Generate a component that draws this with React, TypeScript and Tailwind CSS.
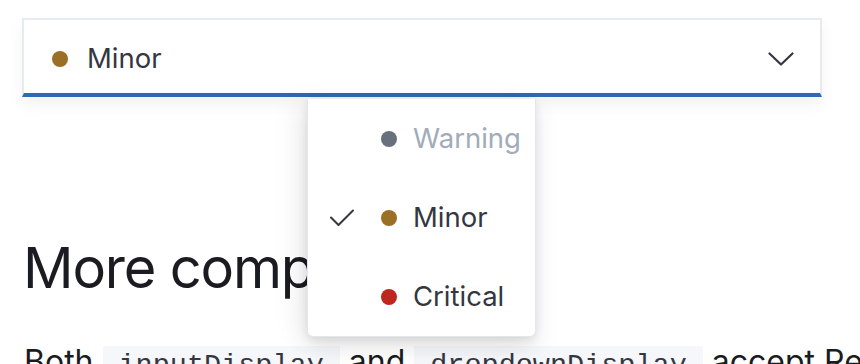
import React from 'react';

type Option = {
    value: string;
    label: string;
    dot: string;
    disabled?: boolean;
};

const options: Option[] = [
    { value: 'warning', label: 'Warning', dot: 'bg-[#69707d]', disabled: true },
    { value: 'minor', label: 'Minor', dot: 'bg-[#9b6f25]' },
    { value: 'critical', label: 'Critical', dot: 'bg-[#bd271e]' },
];

const Chevron = () => (
    <svg width="26" height="16" viewBox="0 0 26 16" fill="none">
        <path d="M1.5 2.5 L13 13.5 L24.5 2.5" stroke="#343741" strokeWidth="2.2" strokeLinecap="round" strokeLinejoin="round" />
    </svg>
);

const Check = () => (
    <svg width="26" height="18" viewBox="0 0 26 18" fill="none">
        <path d="M2 8.5 L9.5 16 L24 1.5" stroke="#343741" strokeWidth="2" strokeLinecap="round" strokeLinejoin="round" />
    </svg>
);

const Code = ({ children }: { children: React.ReactNode }) => (
    <code className="bg-[#f5f7fa] text-[#343741] px-[16px] py-[3px] text-[28.5px] font-['Liberation_Mono','DejaVu_Sans_Mono',monospace]">
        {children}
    </code>
);

export default function App() {
    const selected = 'minor';
    const current = options.find((o) => o.value === selected)!;

    return (
        <div className="relative w-[860px] h-[364px] overflow-hidden bg-white font-['Inter','Noto_Sans',sans-serif] text-[#343741]">
            <div className="pt-[18px] pl-[22px]">
                <button className="w-[800px] h-[79px] flex items-center justify-between bg-white border-t-2 border-x-2 border-[#e6eaf1] border-b-4 border-b-[#2b6bb1] pl-[28px] pr-[26px] pt-[4px] shadow-[0_8px_14px_rgba(0,0,0,0.05)]">
                    <span className="flex items-center gap-[19px]">
                        <span className={`w-[16px] h-[16px] rounded-full ${current.dot}`} />
                        <span className="text-[27.5px] leading-none">{current.label}</span>
                    </span>
                    <Chevron />
                </button>
            </div>

            <h2 className="mt-[137px] ml-[23px] text-[56px] leading-[68px] tracking-[-1.2px] font-normal text-[#1a1c21] whitespace-nowrap">
                More complex
            </h2>

            <p className="mt-[40px] ml-[24px] text-[32px] leading-[40px] text-[#1a1c21] whitespace-nowrap">
                Both <Code>inputDisplay</Code> and <Code>dropdownDisplay</Code> accept React nodes
            </p>

            {/* open dropdown list */}
            <div className="absolute left-[307px] top-[99px] w-[229px] bg-white border border-[#e3e6ec] border-t-0 rounded-b-[6px] shadow-[0_10px_24px_rgba(0,0,0,0.10),0_3px_8px_rgba(0,0,0,0.08),-12px_0_30px_rgba(0,0,0,0.04)]">
                {options.map((o) => (
                    <div key={o.value} className="h-[79px] flex items-center">
                        <span className="w-[21px] shrink-0" />
                        <span className="w-[26px] shrink-0 flex justify-center">
                            {o.value === selected ? <Check /> : null}
                        </span>
                        <span className="w-[26px] shrink-0" />
                        <span className={`w-[16px] h-[16px] rounded-full shrink-0 ${o.dot}`} />
                        <span className={`ml-[16px] text-[27.5px] leading-none ${o.disabled ? 'text-[#a2abba]' : 'text-[#343741]'}`}>
                            {o.label}
                        </span>
                    </div>
                ))}
            </div>
        </div>
    );
}
